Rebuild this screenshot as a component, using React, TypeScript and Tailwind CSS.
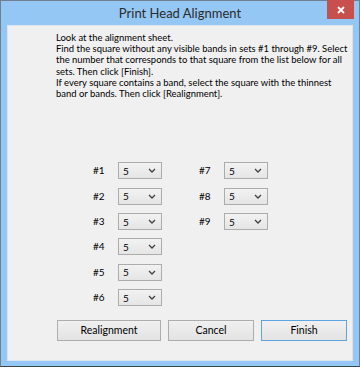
import React from "react";

const Select = ({ value }: { value: string }) => (
  <div className="flex items-center justify-between w-[44px] h-[17px] border border-[#acacac] bg-gradient-to-b from-[#f2f2f2] to-[#e5e5e5] pl-[4px] pr-[5px]">
    <span className="text-[10px] leading-none text-black">{value}</span>
    <svg width="8" height="5" viewBox="0 0 8 5" fill="none">
      <path d="M1 1l3 3 3-3" stroke="#404040" strokeWidth="1.3" />
    </svg>
  </div>
);

const Row = ({ label }: { label: string }) => (
  <div className="flex items-center h-[17px]">
    <span className="w-[25px] text-[10px] text-black">{label}</span>
    <Select value="5" />
  </div>
);

const Button = ({ label, width, primary }: { label: string; width: string; primary?: boolean }) => (
  <button
    className={`${width} h-[21px] flex items-center justify-center text-[10.5px] text-black bg-gradient-to-b from-[#f0f0f0] to-[#e3e3e3] border ${
      primary ? "border-[#5fa4dc]" : "border-[#adadad]"
    }`}
  >
    {label}
  </button>
);

export default function App() {
  return (
    <div
      className="w-[360px] h-[367px] flex flex-col bg-[#94c7f4] border border-[#6f8092] border-b-[#3c4650]"
      style={{ fontFamily: 'Lato, "Open Sans", sans-serif' }}
    >
      {/* Title bar */}
      <div className="relative h-[24px] flex items-center justify-center shrink-0">
        <span className="text-[13px] text-[#2b2b2b] pt-[1px]">Print Head Alignment</span>
        <div className="absolute right-[5px] top-[-1px] w-[27px] h-[19px] bg-[#c7504f] flex items-center justify-center">
          <svg width="8" height="8" viewBox="0 0 8 8">
            <path d="M1 1l6 6M7 1l-6 6" stroke="white" strokeWidth="1.8" />
          </svg>
        </div>
      </div>

      {/* Content */}
      <div className="flex-1 mx-[6px] mb-[5px] bg-[#f0f0f0] border border-[#dde4ec] flex flex-col">
        <div className="pl-[48px] pt-[6px] text-[9.45px] leading-[11.2px] text-black whitespace-nowrap">
          <p>Look at the alignment sheet.</p>
          <p>
            Find the square without any visible bands in sets #1 through #9. Select
            <br />
            the number that corresponds to that square from the list below for all
            <br />
            sets. Then click [Finish].
          </p>
          <p>
            If every square contains a band, select the square with the thinnest
            <br />
            band or bands. Then click [Realignment].
          </p>
        </div>

        <div className="flex gap-[37px] pl-[85px] mt-[63px]">
          <div className="flex flex-col gap-[8.4px]">
            <Row label="#1" />
            <Row label="#2" />
            <Row label="#3" />
            <Row label="#4" />
            <Row label="#5" />
            <Row label="#6" />
          </div>
          <div className="flex flex-col gap-[8.4px]">
            <Row label="#7" />
            <Row label="#8" />
            <Row label="#9" />
          </div>
        </div>

        <div className="flex gap-[7px] pl-[49px] mt-[14px]">
          <Button label="Realignment" width="w-[104px]" />
          <Button label="Cancel" width="w-[86px]" />
          <Button label="Finish" width="w-[86px]" primary />
        </div>
      </div>
    </div>
  );
}
